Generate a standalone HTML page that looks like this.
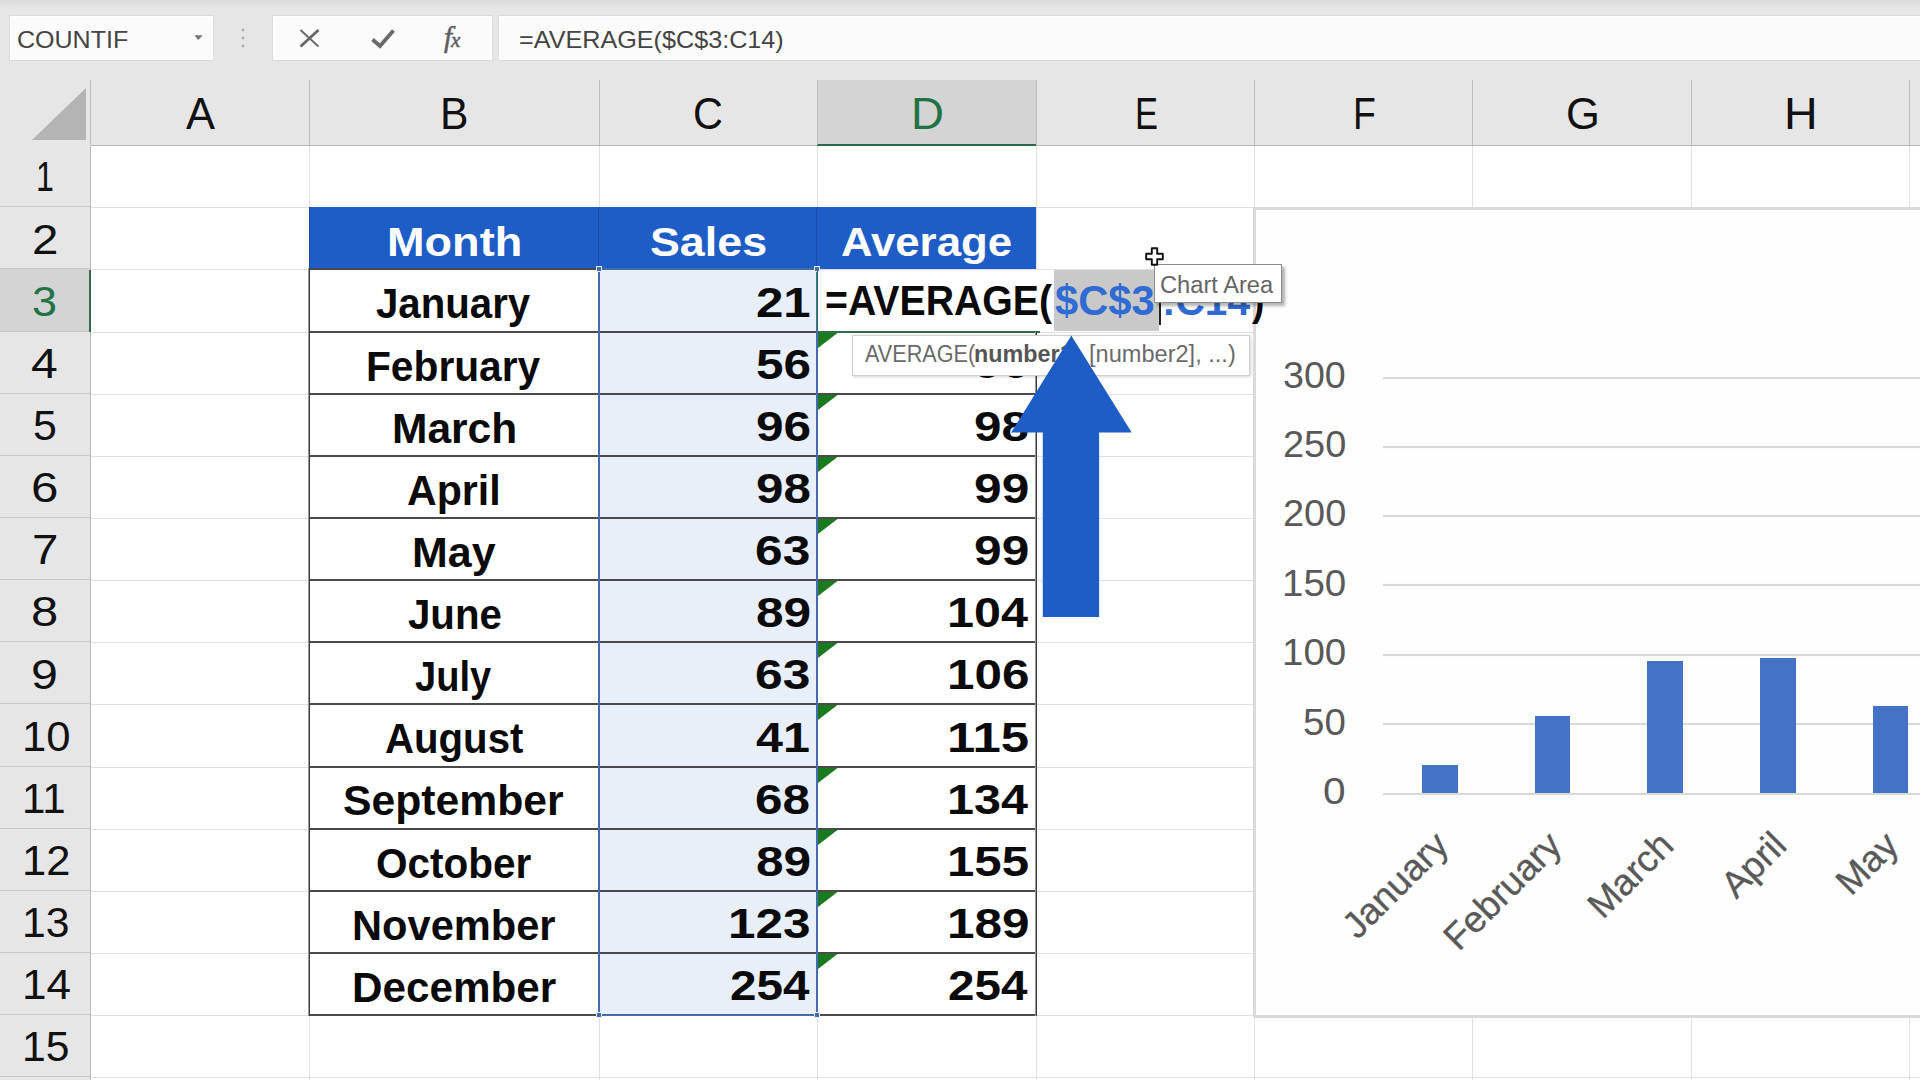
<!DOCTYPE html>
<html><head><meta charset="utf-8"><title>Excel</title>
<style>
*{box-sizing:border-box;margin:0;padding:0}
html,body{width:1920px;height:1080px;overflow:hidden;background:#fff;font-family:"Liberation Sans",sans-serif;}
.a{position:absolute}
#top{left:0;top:0;width:1920px;height:80px;background:#e6e6e6}
.box{background:#fbfbfb;top:15px;height:46px;border:1px solid #dbdbdb;box-shadow:inset 0 0 0 1.5px #fff}
.ch{top:80px;height:65px;background:#e6e6e6;border-left:1px solid #bdbdbd}
.rh{left:0;width:91px;background:#e6e6e6;color:#111;font-size:44px;text-align:center;border-bottom:1px solid #c8c8c8}
.rh span,.ch span{display:inline-block;transform:scaleX(.9)}
.gl{background:#e0e0e0}
.cell{font-weight:bold;font-size:40px;color:#0a0a0a;white-space:nowrap}
.hd{background:#1e5cc6;color:#fff;text-align:center;font-weight:bold;font-size:40px}
.tb{background:#4a4a4a}
</style></head><body>

<div class="a" style="left:0;top:0;width:1920px;height:1080px;background:#fff"></div>
<div class="a gl" style="left:309px;top:145px;width:1px;height:935px"></div>
<div class="a gl" style="left:599px;top:145px;width:1px;height:935px"></div>
<div class="a gl" style="left:817px;top:145px;width:1px;height:935px"></div>
<div class="a gl" style="left:1036px;top:145px;width:1px;height:935px"></div>
<div class="a gl" style="left:1254px;top:145px;width:1px;height:935px"></div>
<div class="a gl" style="left:1472px;top:145px;width:1px;height:935px"></div>
<div class="a gl" style="left:1691px;top:145px;width:1px;height:935px"></div>
<div class="a gl" style="left:1909px;top:145px;width:1px;height:935px"></div>
<div class="a gl" style="left:90px;top:207px;width:1830px;height:1px"></div>
<div class="a gl" style="left:90px;top:269px;width:1830px;height:1px"></div>
<div class="a gl" style="left:90px;top:332px;width:1830px;height:1px"></div>
<div class="a gl" style="left:90px;top:394px;width:1830px;height:1px"></div>
<div class="a gl" style="left:90px;top:456px;width:1830px;height:1px"></div>
<div class="a gl" style="left:90px;top:518px;width:1830px;height:1px"></div>
<div class="a gl" style="left:90px;top:580px;width:1830px;height:1px"></div>
<div class="a gl" style="left:90px;top:642px;width:1830px;height:1px"></div>
<div class="a gl" style="left:90px;top:704px;width:1830px;height:1px"></div>
<div class="a gl" style="left:90px;top:767px;width:1830px;height:1px"></div>
<div class="a gl" style="left:90px;top:829px;width:1830px;height:1px"></div>
<div class="a gl" style="left:90px;top:891px;width:1830px;height:1px"></div>
<div class="a gl" style="left:90px;top:953px;width:1830px;height:1px"></div>
<div class="a gl" style="left:90px;top:1015px;width:1830px;height:1px"></div>
<div class="a gl" style="left:90px;top:1077px;width:1830px;height:1px"></div>
<div class="a" id="top"></div>
<div class="a" style="left:0;top:0;width:1920px;height:10px;background:linear-gradient(#dcdcdc,#e7e7e7)"></div>
<div class="a box" style="left:9px;width:205px"></div>
<div class="a box" style="left:272px;width:221px"></div>
<div class="a box" style="left:498px;width:1430px"></div>
<svg class="a" style="left:192px;top:33px" width="14" height="10" viewBox="0 0 14 10"><path d="M2.2 2.3h8.4L6.4 7.1z" fill="#757575"/></svg>
<svg class="a" style="left:238.6px;top:25.6px" width="8" height="24" viewBox="0 0 8 24"><circle cx="4" cy="4" r="1.4" fill="#b0b0b0"/><circle cx="4" cy="12" r="1.4" fill="#b0b0b0"/><circle cx="4" cy="20" r="1.4" fill="#b0b0b0"/></svg>
<svg class="a" style="left:297px;top:26px" width="24" height="24" viewBox="0 0 24 24"><path d="M3.5 4L21.5 20.5" stroke="#6a6a6a" stroke-width="2" fill="none"/><path d="M21.5 4L3.5 20.5" stroke="#666" stroke-width="2.8" fill="none"/></svg>
<svg class="a" style="left:368px;top:26px" width="28" height="24" viewBox="0 0 28 24"><path d="M4.5 13.5L12 20L25.5 4.5" stroke="#6a6a6a" stroke-width="3.8" fill="none"/></svg>
<div class="a" style="left:444px;top:19px;font-family:'Liberation Serif',serif;font-style:italic;font-size:29px;color:#5e5e5e;-webkit-text-stroke:.5px #5e5e5e;line-height:36px;letter-spacing:-1px">f<span style="font-size:21px">x</span></div>
<div class="a" style="left:0;top:80px;width:1920px;height:65px;background:#e6e6e6"></div>
<div class="a ch" style="left:90px;width:219px;"></div>
<div class="a ch" style="left:309px;width:290px;"></div>
<div class="a ch" style="left:599px;width:218px;"></div>
<div class="a ch" style="left:817px;width:219px;background:#d4d4d4;color:#217346;border-bottom:2px solid #2b6b4c;height:66px;"></div>
<div class="a ch" style="left:1036px;width:218px;"></div>
<div class="a ch" style="left:1254px;width:218px;"></div>
<div class="a ch" style="left:1472px;width:219px;"></div>
<div class="a ch" style="left:1691px;width:218px;"></div>
<div class="a ch" style="left:0;width:90px;border-left:none"></div>
<div class="a ch" style="left:1909px;width:11px"></div>
<div class="a" style="left:0;top:145px;width:817px;height:1px;background:#b5b5b5"></div>
<div class="a" style="left:1036px;top:145px;width:884px;height:1px;background:#b5b5b5"></div>
<svg class="a" style="left:30px;top:86px" width="58" height="56" viewBox="0 0 58 56"><path d="M56 2V54H2z" fill="#b4b4b4"/></svg>
<div class="a rh" style="top:145px;height:62px;line-height:66px;"></div>
<div class="a rh" style="top:207px;height:62px;line-height:66px;"></div>
<div class="a rh" style="top:269px;height:63px;line-height:67px;background:#d3d4d3;color:#217346;"></div>
<div class="a rh" style="top:332px;height:62px;line-height:66px;"></div>
<div class="a rh" style="top:394px;height:62px;line-height:66px;"></div>
<div class="a rh" style="top:456px;height:62px;line-height:66px;"></div>
<div class="a rh" style="top:518px;height:62px;line-height:66px;"></div>
<div class="a rh" style="top:580px;height:62px;line-height:66px;"></div>
<div class="a rh" style="top:642px;height:62px;line-height:66px;"></div>
<div class="a rh" style="top:704px;height:63px;line-height:67px;"></div>
<div class="a rh" style="top:767px;height:62px;line-height:66px;"></div>
<div class="a rh" style="top:829px;height:62px;line-height:66px;"></div>
<div class="a rh" style="top:891px;height:62px;line-height:66px;"></div>
<div class="a rh" style="top:953px;height:62px;line-height:66px;"></div>
<div class="a rh" style="top:1015px;height:62px;line-height:66px;"></div>
<div class="a rh" style="top:1077px;height:62px;line-height:66px;"></div>
<div class="a" style="left:90px;top:146px;width:1px;height:934px;background:#b8b8b8"></div>
<div class="a" style="left:89px;top:270px;width:2px;height:62px;background:#2f6b4c"></div>
<div class="a" style="left:17.25px;top:28.06px;font-size:24.5px;line-height:24.5px;font-weight:normal;color:#444;white-space:nowrap;transform-origin:0 0;transform:scaleX(1.0216);">COUNTIF</div>
<div class="a" style="left:519.30px;top:27.76px;font-size:24.5px;line-height:24.5px;font-weight:normal;color:#444;white-space:nowrap;transform-origin:0 0;transform:scaleX(1.0278);">=AVERAGE($C$3:C14)</div>
<div class="a" style="left:185.90px;top:91.75px;font-size:44px;line-height:44px;font-weight:normal;color:#111;white-space:nowrap;transform-origin:0 0;transform:scaleX(0.9877);">A</div>
<div class="a" style="left:439.69px;top:91.75px;font-size:44px;line-height:44px;font-weight:normal;color:#111;white-space:nowrap;transform-origin:0 0;transform:scaleX(0.9686);">B</div>
<div class="a" style="left:692.63px;top:91.75px;font-size:44px;line-height:44px;font-weight:normal;color:#111;white-space:nowrap;transform-origin:0 0;transform:scaleX(0.9413);">C</div>
<div class="a" style="left:911.16px;top:91.75px;font-size:44px;line-height:44px;font-weight:normal;color:#217346;white-space:nowrap;transform-origin:0 0;transform:scaleX(1.0351);">D</div>
<div class="a" style="left:1135.04px;top:91.75px;font-size:44px;line-height:44px;font-weight:normal;color:#111;white-space:nowrap;transform-origin:0 0;transform:scaleX(0.7840);">E</div>
<div class="a" style="left:1352.61px;top:91.75px;font-size:44px;line-height:44px;font-weight:normal;color:#111;white-space:nowrap;transform-origin:0 0;transform:scaleX(0.8491);">F</div>
<div class="a" style="left:1565.62px;top:91.75px;font-size:44px;line-height:44px;font-weight:normal;color:#111;white-space:nowrap;transform-origin:0 0;transform:scaleX(0.9889);">G</div>
<div class="a" style="left:1784.17px;top:91.75px;font-size:44px;line-height:44px;font-weight:normal;color:#111;white-space:nowrap;transform-origin:0 0;transform:scaleX(1.0586);">H</div>
<div class="a" style="left:35.59px;top:155.44px;font-size:43px;line-height:43px;font-weight:normal;color:#111;white-space:nowrap;transform-origin:0 0;transform:scaleX(0.7474);">1</div>
<div class="a" style="left:31.63px;top:217.58px;font-size:43px;line-height:43px;font-weight:normal;color:#111;white-space:nowrap;transform-origin:0 0;transform:scaleX(1.1031);">2</div>
<div class="a" style="left:31.82px;top:279.72px;font-size:43px;line-height:43px;font-weight:normal;color:#217346;white-space:nowrap;transform-origin:0 0;transform:scaleX(1.0428);">3</div>
<div class="a" style="left:30.92px;top:341.86px;font-size:43px;line-height:43px;font-weight:normal;color:#111;white-space:nowrap;transform-origin:0 0;transform:scaleX(1.1190);">4</div>
<div class="a" style="left:33.28px;top:404.00px;font-size:43px;line-height:43px;font-weight:normal;color:#111;white-space:nowrap;transform-origin:0 0;transform:scaleX(0.9988);">5</div>
<div class="a" style="left:31.04px;top:466.14px;font-size:43px;line-height:43px;font-weight:normal;color:#111;white-space:nowrap;transform-origin:0 0;transform:scaleX(1.1464);">6</div>
<div class="a" style="left:31.63px;top:528.28px;font-size:43px;line-height:43px;font-weight:normal;color:#111;white-space:nowrap;transform-origin:0 0;transform:scaleX(1.1031);">7</div>
<div class="a" style="left:31.12px;top:590.42px;font-size:43px;line-height:43px;font-weight:normal;color:#111;white-space:nowrap;transform-origin:0 0;transform:scaleX(1.1370);">8</div>
<div class="a" style="left:31.02px;top:652.56px;font-size:43px;line-height:43px;font-weight:normal;color:#111;white-space:nowrap;transform-origin:0 0;transform:scaleX(1.1253);">9</div>
<div class="a" style="left:21.93px;top:714.70px;font-size:43px;line-height:43px;font-weight:normal;color:#111;white-space:nowrap;transform-origin:0 0;transform:scaleX(1.0142);">10</div>
<div class="a" style="left:22.04px;top:776.84px;font-size:43px;line-height:43px;font-weight:normal;color:#111;white-space:nowrap;transform-origin:0 0;transform:scaleX(0.9785);">11</div>
<div class="a" style="left:21.94px;top:838.98px;font-size:43px;line-height:43px;font-weight:normal;color:#111;white-space:nowrap;transform-origin:0 0;transform:scaleX(1.0103);">12</div>
<div class="a" style="left:22.00px;top:901.12px;font-size:43px;line-height:43px;font-weight:normal;color:#111;white-space:nowrap;transform-origin:0 0;transform:scaleX(0.9935);">13</div>
<div class="a" style="left:21.89px;top:963.26px;font-size:43px;line-height:43px;font-weight:normal;color:#111;white-space:nowrap;transform-origin:0 0;transform:scaleX(1.0249);">14</div>
<div class="a" style="left:22.00px;top:1025.40px;font-size:43px;line-height:43px;font-weight:normal;color:#111;white-space:nowrap;transform-origin:0 0;transform:scaleX(0.9910);">15</div>
<div class="a" style="left:21.91px;top:1087.54px;font-size:43px;line-height:43px;font-weight:normal;color:#111;white-space:nowrap;transform-origin:0 0;transform:scaleX(1.0193);">16</div>
<div class="a" style="left:599px;top:269px;width:218px;height:746px;background:#e8eff9"></div>
<div class="a" style="left:818px;top:270px;width:437px;height:62px;background:#fff"></div>
<div class="a" style="left:309px;top:207px;width:727px;height:62px;background:#1e5cc6"></div>
<div class="a" style="left:598px;top:207px;width:1px;height:62px;background:#1a4da8"></div>
<div class="a" style="left:816px;top:207px;width:1px;height:62px;background:#1a4da8"></div>
<div class="a tb" style="left:309px;top:268px;width:290px;height:2px"></div>
<div class="a tb" style="left:309px;top:331px;width:509px;height:2px"></div>
<div class="a" style="left:818px;top:331px;width:222px;height:2px;background:#2f6b4c"></div>
<div class="a tb" style="left:309px;top:393px;width:727px;height:2px"></div>
<div class="a tb" style="left:309px;top:455px;width:727px;height:2px"></div>
<div class="a tb" style="left:309px;top:517px;width:727px;height:2px"></div>
<div class="a tb" style="left:309px;top:579px;width:727px;height:2px"></div>
<div class="a tb" style="left:309px;top:641px;width:727px;height:2px"></div>
<div class="a tb" style="left:309px;top:703px;width:727px;height:2px"></div>
<div class="a tb" style="left:309px;top:766px;width:727px;height:2px"></div>
<div class="a tb" style="left:309px;top:828px;width:727px;height:2px"></div>
<div class="a tb" style="left:309px;top:890px;width:727px;height:2px"></div>
<div class="a tb" style="left:309px;top:952px;width:727px;height:2px"></div>
<div class="a tb" style="left:309px;top:1014px;width:727px;height:2px"></div>
<div class="a" style="left:309px;top:207px;width:1px;height:62px;background:#1a4aa6"></div>
<div class="a" style="left:308px;top:268px;width:1px;height:748px;background:#9a9a9a"></div>
<div class="a" style="left:309px;top:268px;width:1px;height:748px;background:#3c3c3c"></div>
<div class="a" style="left:1036px;top:332px;width:1px;height:684px;background:#3c3c3c"></div>
<div class="a" style="left:1035px;top:332px;width:1px;height:684px;background:#9a9a9a"></div>
<div class="a" style="left:598px;top:268px;width:220px;height:2px;background:#456cae"></div>
<div class="a" style="left:598px;top:1014px;width:220px;height:2px;background:#456cae"></div>
<div class="a" style="left:598px;top:268px;width:2px;height:748px;background:#456cae"></div>
<div class="a" style="left:816px;top:268px;width:2px;height:748px;background:#456cae"></div>
<div class="a" style="left:596px;top:266px;width:6px;height:6px;background:#456cae;border:1px solid #e8eff9"></div>
<div class="a" style="left:814px;top:266px;width:6px;height:6px;background:#456cae;border:1px solid #e8eff9"></div>
<div class="a" style="left:596px;top:1012px;width:6px;height:6px;background:#456cae;border:1px solid #e8eff9"></div>
<div class="a" style="left:814px;top:1012px;width:6px;height:6px;background:#456cae;border:1px solid #e8eff9"></div>
<div class="a" style="left:817px;top:271px;width:1px;height:59px;background:#217346"></div>
<div class="a" style="left:386.67px;top:221.99px;font-size:41px;line-height:41px;font-weight:bold;color:#fff;white-space:nowrap;transform-origin:0 0;transform:scaleX(1.0996);">Month</div>
<div class="a" style="left:649.57px;top:221.99px;font-size:41px;line-height:41px;font-weight:bold;color:#fff;white-space:nowrap;transform-origin:0 0;transform:scaleX(1.0924);">Sales</div>
<div class="a" style="left:840.81px;top:221.99px;font-size:41px;line-height:41px;font-weight:bold;color:#fff;white-space:nowrap;transform-origin:0 0;transform:scaleX(1.0668);">Average</div>
<div class="a" style="left:376.40px;top:283.37px;font-size:42px;line-height:42px;font-weight:bold;color:#0a0a0a;white-space:nowrap;transform-origin:0 0;transform:scaleX(0.9574);">January</div>
<div class="a" style="left:755.60px;top:280.56px;font-size:42.6px;line-height:42.6px;font-weight:bold;color:#0a0a0a;white-space:nowrap;transform-origin:0 0;transform:scaleX(1.1553);">21</div>
<div class="a" style="left:365.95px;top:345.51px;font-size:42px;line-height:42px;font-weight:bold;color:#0a0a0a;white-space:nowrap;transform-origin:0 0;transform:scaleX(0.9693);">February</div>
<div class="a" style="left:755.72px;top:342.70px;font-size:42.6px;line-height:42.6px;font-weight:bold;color:#0a0a0a;white-space:nowrap;transform-origin:0 0;transform:scaleX(1.1608);">56</div>
<svg class="a" style="left:818px;top:333px" width="20" height="16" viewBox="0 0 20 16"><path d="M0 0H19.5L0 15z" fill="#1a7a1f"/></svg>
<div class="a" style="left:391.64px;top:407.65px;font-size:42px;line-height:42px;font-weight:bold;color:#0a0a0a;white-space:nowrap;transform-origin:0 0;transform:scaleX(1.0123);">March</div>
<div class="a" style="left:755.59px;top:404.84px;font-size:42.6px;line-height:42.6px;font-weight:bold;color:#0a0a0a;white-space:nowrap;transform-origin:0 0;transform:scaleX(1.1636);">96</div>
<div class="a" style="left:974.10px;top:404.84px;font-size:42.6px;line-height:42.6px;font-weight:bold;color:#0a0a0a;white-space:nowrap;transform-origin:0 0;transform:scaleX(1.1581);">98</div>
<svg class="a" style="left:818px;top:395px" width="20" height="16" viewBox="0 0 20 16"><path d="M0 0H19.5L0 15z" fill="#1a7a1f"/></svg>
<div class="a" style="left:407.07px;top:469.79px;font-size:42px;line-height:42px;font-weight:bold;color:#0a0a0a;white-space:nowrap;transform-origin:0 0;transform:scaleX(0.9797);">April</div>
<div class="a" style="left:755.60px;top:466.98px;font-size:42.6px;line-height:42.6px;font-weight:bold;color:#0a0a0a;white-space:nowrap;transform-origin:0 0;transform:scaleX(1.1581);">98</div>
<div class="a" style="left:974.09px;top:466.98px;font-size:42.6px;line-height:42.6px;font-weight:bold;color:#0a0a0a;white-space:nowrap;transform-origin:0 0;transform:scaleX(1.1664);">99</div>
<svg class="a" style="left:818px;top:457px" width="20" height="16" viewBox="0 0 20 16"><path d="M0 0H19.5L0 15z" fill="#1a7a1f"/></svg>
<div class="a" style="left:412.21px;top:531.93px;font-size:42px;line-height:42px;font-weight:bold;color:#0a0a0a;white-space:nowrap;transform-origin:0 0;transform:scaleX(1.0221);">May</div>
<div class="a" style="left:755.46px;top:529.12px;font-size:42.6px;line-height:42.6px;font-weight:bold;color:#0a0a0a;white-space:nowrap;transform-origin:0 0;transform:scaleX(1.1664);">63</div>
<div class="a" style="left:974.09px;top:529.12px;font-size:42.6px;line-height:42.6px;font-weight:bold;color:#0a0a0a;white-space:nowrap;transform-origin:0 0;transform:scaleX(1.1664);">99</div>
<svg class="a" style="left:818px;top:519px" width="20" height="16" viewBox="0 0 20 16"><path d="M0 0H19.5L0 15z" fill="#1a7a1f"/></svg>
<div class="a" style="left:407.50px;top:594.07px;font-size:42px;line-height:42px;font-weight:bold;color:#0a0a0a;white-space:nowrap;transform-origin:0 0;transform:scaleX(0.9576);">June</div>
<div class="a" style="left:755.71px;top:591.26px;font-size:42.6px;line-height:42.6px;font-weight:bold;color:#0a0a0a;white-space:nowrap;transform-origin:0 0;transform:scaleX(1.1636);">89</div>
<div class="a" style="left:946.77px;top:591.26px;font-size:42.6px;line-height:42.6px;font-weight:bold;color:#0a0a0a;white-space:nowrap;transform-origin:0 0;transform:scaleX(1.1382);">104</div>
<svg class="a" style="left:818px;top:581px" width="20" height="16" viewBox="0 0 20 16"><path d="M0 0H19.5L0 15z" fill="#1a7a1f"/></svg>
<div class="a" style="left:415.03px;top:656.21px;font-size:42px;line-height:42px;font-weight:bold;color:#0a0a0a;white-space:nowrap;transform-origin:0 0;transform:scaleX(0.9067);">July</div>
<div class="a" style="left:755.46px;top:653.40px;font-size:42.6px;line-height:42.6px;font-weight:bold;color:#0a0a0a;white-space:nowrap;transform-origin:0 0;transform:scaleX(1.1664);">63</div>
<div class="a" style="left:946.71px;top:653.40px;font-size:42.6px;line-height:42.6px;font-weight:bold;color:#0a0a0a;white-space:nowrap;transform-origin:0 0;transform:scaleX(1.1599);">106</div>
<svg class="a" style="left:818px;top:643px" width="20" height="16" viewBox="0 0 20 16"><path d="M0 0H19.5L0 15z" fill="#1a7a1f"/></svg>
<div class="a" style="left:384.90px;top:718.35px;font-size:42px;line-height:42px;font-weight:bold;color:#0a0a0a;white-space:nowrap;transform-origin:0 0;transform:scaleX(0.9566);">August</div>
<div class="a" style="left:756.47px;top:715.54px;font-size:42.6px;line-height:42.6px;font-weight:bold;color:#0a0a0a;white-space:nowrap;transform-origin:0 0;transform:scaleX(1.1364);">41</div>
<div class="a" style="left:946.62px;top:715.54px;font-size:42.6px;line-height:42.6px;font-weight:bold;color:#0a0a0a;white-space:nowrap;transform-origin:0 0;transform:scaleX(1.1960);">115</div>
<svg class="a" style="left:818px;top:705px" width="20" height="16" viewBox="0 0 20 16"><path d="M0 0H19.5L0 15z" fill="#1a7a1f"/></svg>
<div class="a" style="left:342.83px;top:780.49px;font-size:42px;line-height:42px;font-weight:bold;color:#0a0a0a;white-space:nowrap;transform-origin:0 0;transform:scaleX(1.0169);">September</div>
<div class="a" style="left:755.47px;top:777.68px;font-size:42.6px;line-height:42.6px;font-weight:bold;color:#0a0a0a;white-space:nowrap;transform-origin:0 0;transform:scaleX(1.1608);">68</div>
<div class="a" style="left:946.77px;top:777.68px;font-size:42.6px;line-height:42.6px;font-weight:bold;color:#0a0a0a;white-space:nowrap;transform-origin:0 0;transform:scaleX(1.1382);">134</div>
<svg class="a" style="left:818px;top:768px" width="20" height="16" viewBox="0 0 20 16"><path d="M0 0H19.5L0 15z" fill="#1a7a1f"/></svg>
<div class="a" style="left:375.88px;top:842.63px;font-size:42px;line-height:42px;font-weight:bold;color:#0a0a0a;white-space:nowrap;transform-origin:0 0;transform:scaleX(0.9650);">October</div>
<div class="a" style="left:755.71px;top:839.82px;font-size:42.6px;line-height:42.6px;font-weight:bold;color:#0a0a0a;white-space:nowrap;transform-origin:0 0;transform:scaleX(1.1636);">89</div>
<div class="a" style="left:946.73px;top:839.82px;font-size:42.6px;line-height:42.6px;font-weight:bold;color:#0a0a0a;white-space:nowrap;transform-origin:0 0;transform:scaleX(1.1544);">155</div>
<svg class="a" style="left:818px;top:830px" width="20" height="16" viewBox="0 0 20 16"><path d="M0 0H19.5L0 15z" fill="#1a7a1f"/></svg>
<div class="a" style="left:352.19px;top:904.77px;font-size:42px;line-height:42px;font-weight:bold;color:#0a0a0a;white-space:nowrap;transform-origin:0 0;transform:scaleX(0.9910);">November</div>
<div class="a" style="left:728.21px;top:901.96px;font-size:42.6px;line-height:42.6px;font-weight:bold;color:#0a0a0a;white-space:nowrap;transform-origin:0 0;transform:scaleX(1.1599);">123</div>
<div class="a" style="left:946.71px;top:901.96px;font-size:42.6px;line-height:42.6px;font-weight:bold;color:#0a0a0a;white-space:nowrap;transform-origin:0 0;transform:scaleX(1.1617);">189</div>
<svg class="a" style="left:818px;top:892px" width="20" height="16" viewBox="0 0 20 16"><path d="M0 0H19.5L0 15z" fill="#1a7a1f"/></svg>
<div class="a" style="left:352.16px;top:966.91px;font-size:42px;line-height:42px;font-weight:bold;color:#0a0a0a;white-space:nowrap;transform-origin:0 0;transform:scaleX(1.0049);">December</div>
<div class="a" style="left:729.75px;top:964.10px;font-size:42.6px;line-height:42.6px;font-weight:bold;color:#0a0a0a;white-space:nowrap;transform-origin:0 0;transform:scaleX(1.1173);">254</div>
<div class="a" style="left:948.25px;top:964.10px;font-size:42.6px;line-height:42.6px;font-weight:bold;color:#0a0a0a;white-space:nowrap;transform-origin:0 0;transform:scaleX(1.1173);">254</div>
<svg class="a" style="left:818px;top:954px" width="20" height="16" viewBox="0 0 20 16"><path d="M0 0H19.5L0 15z" fill="#1a7a1f"/></svg>
<div class="a" style="left:974.09px;top:343.05px;font-size:42px;line-height:42px;font-weight:bold;color:#0a0a0a;white-space:nowrap;transform-origin:0 0;transform:scaleX(1.1802);">96</div>
<div class="a" style="left:824.93px;top:280.47px;font-size:42px;line-height:42px;font-weight:bold;color:#0a0a0a;white-space:nowrap;transform-origin:0 0;transform:scaleX(0.9342);">=AVERAGE(</div>
<div class="a" style="left:1054px;top:270px;width:105px;height:61px;background:#c9c9c9"></div>
<div class="a" style="left:1055.48px;top:280.47px;font-size:42px;line-height:42px;font-weight:bold;color:#2f6bd2;white-space:nowrap;transform-origin:0 0;transform:scaleX(0.9920);">$C$3</div>
<div class="a" style="left:1162.14px;top:280.47px;font-size:42px;line-height:42px;font-weight:bold;color:#2f6bd2;white-space:nowrap;transform-origin:0 0;transform:scaleX(0.9662);">:C14</div>
<div class="a" style="left:1252.00px;top:280.47px;font-size:42px;line-height:42px;font-weight:bold;color:#0a0a0a;white-space:nowrap;transform-origin:0 0;transform:scaleX(0.8855);">)</div>
<div class="a" style="left:1159px;top:296px;width:2px;height:29px;background:#222"></div>
<div class="a" style="left:1253px;top:207px;width:690px;height:811px;background:#fefefe;border:3px solid #dadada"></div>
<div class="a" style="left:1252.00px;top:280.47px;font-size:42px;line-height:42px;font-weight:bold;color:#0a0a0a;white-space:nowrap;transform-origin:0 0;transform:scaleX(0.8855);">)</div>
<div class="a" style="left:1383px;top:376.8px;width:540px;height:2px;background:#d9d9d9;box-shadow:0 0 1px #e2e2e2"></div>
<div class="a" style="left:1283.19px;top:358.13px;font-size:36px;line-height:36px;font-weight:normal;color:#595959;white-space:nowrap;transform-origin:0 0;transform:scaleX(1.0448);">300</div>
<div class="a" style="left:1383px;top:445.7px;width:540px;height:2px;background:#d9d9d9;box-shadow:0 0 1px #e2e2e2"></div>
<div class="a" style="left:1282.70px;top:427.03px;font-size:36px;line-height:36px;font-weight:normal;color:#595959;white-space:nowrap;transform-origin:0 0;transform:scaleX(1.0531);">250</div>
<div class="a" style="left:1383px;top:514.6px;width:540px;height:2px;background:#d9d9d9;box-shadow:0 0 1px #e2e2e2"></div>
<div class="a" style="left:1282.70px;top:495.93px;font-size:36px;line-height:36px;font-weight:normal;color:#595959;white-space:nowrap;transform-origin:0 0;transform:scaleX(1.0531);">200</div>
<div class="a" style="left:1383px;top:584.3px;width:540px;height:2px;background:#d9d9d9;box-shadow:0 0 1px #e2e2e2"></div>
<div class="a" style="left:1281.71px;top:565.63px;font-size:36px;line-height:36px;font-weight:normal;color:#595959;white-space:nowrap;transform-origin:0 0;transform:scaleX(1.0700);">150</div>
<div class="a" style="left:1383px;top:653.7px;width:540px;height:2px;background:#d9d9d9;box-shadow:0 0 1px #e2e2e2"></div>
<div class="a" style="left:1281.71px;top:635.03px;font-size:36px;line-height:36px;font-weight:normal;color:#595959;white-space:nowrap;transform-origin:0 0;transform:scaleX(1.0700);">100</div>
<div class="a" style="left:1383px;top:723.4px;width:540px;height:2px;background:#d9d9d9;box-shadow:0 0 1px #e2e2e2"></div>
<div class="a" style="left:1303.26px;top:704.73px;font-size:36px;line-height:36px;font-weight:normal;color:#595959;white-space:nowrap;transform-origin:0 0;transform:scaleX(1.0681);">50</div>
<div class="a" style="left:1383px;top:792.8px;width:540px;height:2px;background:#d9d9d9;box-shadow:0 0 1px #e2e2e2"></div>
<div class="a" style="left:1323.48px;top:774.13px;font-size:36px;line-height:36px;font-weight:normal;color:#595959;white-space:nowrap;transform-origin:0 0;transform:scaleX(1.1285);">0</div>
<div class="a" style="left:1422.2px;top:764.7px;width:35.5px;height:27.9px;background:#4472c4"></div>
<div class="a" style="left:1534.8px;top:716.1px;width:35.5px;height:76.5px;background:#4472c4"></div>
<div class="a" style="left:1647.4px;top:660.6px;width:35.5px;height:132.0px;background:#4472c4"></div>
<div class="a" style="left:1760.0px;top:657.9px;width:35.5px;height:134.7px;background:#4472c4"></div>
<div class="a" style="left:1872.6px;top:706.4px;width:35.5px;height:86.2px;background:#4472c4"></div>
<div class="a" style="left:1042.0px;top:819px;width:400px;height:40px;line-height:40px;text-align:right;font-size:37px;color:#595959;-webkit-text-stroke:.35px #595959;transform-origin:100% 50%;transform:rotate(-45deg);white-space:nowrap">January</div>
<div class="a" style="left:1154.6px;top:819px;width:400px;height:40px;line-height:40px;text-align:right;font-size:37px;color:#595959;-webkit-text-stroke:.35px #595959;transform-origin:100% 50%;transform:rotate(-45deg);white-space:nowrap">February</div>
<div class="a" style="left:1267.2px;top:819px;width:400px;height:40px;line-height:40px;text-align:right;font-size:37px;color:#595959;-webkit-text-stroke:.35px #595959;transform-origin:100% 50%;transform:rotate(-45deg);white-space:nowrap">March</div>
<div class="a" style="left:1379.8px;top:819px;width:400px;height:40px;line-height:40px;text-align:right;font-size:37px;color:#595959;-webkit-text-stroke:.35px #595959;transform-origin:100% 50%;transform:rotate(-45deg);white-space:nowrap">April</div>
<div class="a" style="left:1492.4px;top:819px;width:400px;height:40px;line-height:40px;text-align:right;font-size:37px;color:#595959;-webkit-text-stroke:.35px #595959;transform-origin:100% 50%;transform:rotate(-45deg);white-space:nowrap">May</div>
<div class="a" style="left:852px;top:335px;width:398px;height:41px;background:#fff;border:1px solid #cfcfcf;box-shadow:1px 1px 3px rgba(0,0,0,.18)"></div>
<div class="a" style="left:865.00px;top:342.53px;font-size:23px;line-height:23px;font-weight:normal;color:#6a6a6a;white-space:nowrap;transform-origin:0 0;transform:scaleX(0.9401);">AVERAGE(</div>
<div class="a" style="left:973.98px;top:342.53px;font-size:23px;line-height:23px;font-weight:bold;color:#555;white-space:nowrap;transform-origin:0 0;transform:scaleX(1.0153);">number1</div>
<div class="a" style="left:1089.05px;top:342.53px;font-size:23px;line-height:23px;font-weight:normal;color:#6a6a6a;white-space:nowrap;transform-origin:0 0;transform:scaleX(1.0251);">[number2], ...)</div>
<svg class="a" style="left:1000px;top:330px" width="140" height="295" viewBox="1000 330 140 295"><path d="M1071.3 335.4L1131.7 432.6H1099.1V616.9H1042.8V432.6H1011.1z" fill="#1e5cc6"/></svg>
<div class="a" style="left:1154px;top:264px;width:128px;height:39px;background:#fff;border:1px solid #8c8c8c;box-shadow:3px 3px 3px rgba(0,0,0,.3)"></div>
<div class="a" style="left:1159.82px;top:274.11px;font-size:23.5px;line-height:23.5px;font-weight:normal;color:#666;white-space:nowrap;transform-origin:0 0;transform:scaleX(1.0071);">Chart Area</div>
<svg class="a" style="left:1144px;top:245.5px" width="21" height="21" viewBox="0 0 21 21"><path d="M7.8 2.2h5.4v5.6h5.6v5.4h-5.6v5.6H7.8v-5.6H2.2V7.8h5.6z" fill="#fff" stroke="#111" stroke-width="1.9" stroke-linejoin="round"/></svg>
</body></html>
